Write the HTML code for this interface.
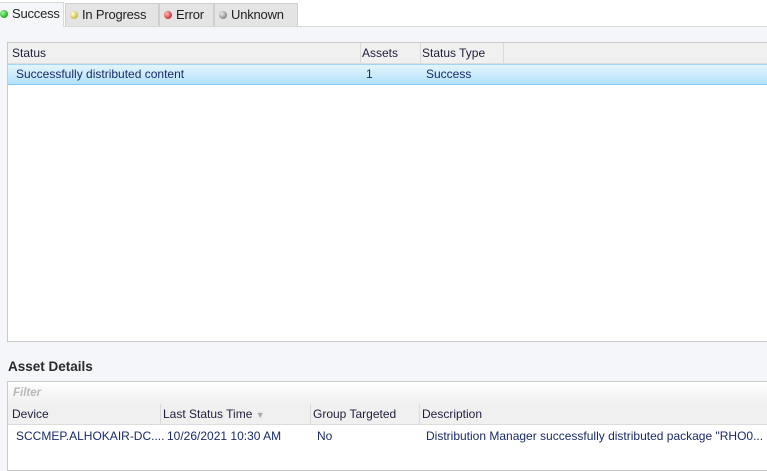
<!DOCTYPE html>
<html><head><style>
body{margin:0;width:767px;height:464px;overflow:hidden;background:#f5f6f9;font-family:"Liberation Sans",sans-serif;position:relative;color:#1e1e50;white-space:nowrap}
.abs{position:absolute}
.tabbar{left:0;top:0;width:767px;height:26px;background:#fff;border-bottom:1px solid #d8d8d8}
.tab{position:absolute;top:3px;height:23px;background:#e4e4e4;border:1px solid #cfcfcf;border-bottom:none;box-sizing:border-box;font-size:13px;letter-spacing:-0.2px;color:#222;line-height:22px;padding-left:4px;white-space:nowrap;overflow:hidden}
.tab.sel{top:2px;height:25px;background:#f5f6f9;border-color:#d8d8d8;padding-left:1px}
.dot{display:inline-block;width:8px;height:8px;border-radius:50%;margin-right:4px;vertical-align:0}
.panel{left:7px;top:42px;width:770px;height:300px;background:#fff;border:1px solid #c9c9c9;box-sizing:border-box}
.hdr{position:absolute;left:0;right:0;height:20px;background:#f0f0f0;border-bottom:1px solid #dcdcdc;font-size:12px;line-height:20px;color:#1e1e3c}
.hdr span,.row span{position:absolute}
.sep{position:absolute;top:0;width:1px;height:20px;background:#dadada}
.row{position:absolute;left:0;right:0;height:19px;font-size:12px;line-height:19px;color:#1a2a6a}
</style></head><body>
<div class="abs tabbar"></div>
<div class="tab sel" style="left:-2px;width:66px"><span class="dot" style="background:radial-gradient(circle at 35% 35%,#9f9,#2a2 70%)"></span>Success</div>
<div class="tab" style="left:65px;width:94px"><span class="dot" style="background:radial-gradient(circle at 35% 35%,#ffe,#cb3 70%)"></span>In Progress</div>
<div class="tab" style="left:159px;width:55px"><span class="dot" style="background:radial-gradient(circle at 35% 35%,#fbb,#c33 70%)"></span>Error</div>
<div class="tab" style="left:214px;width:84px"><span class="dot" style="background:radial-gradient(circle at 35% 35%,#eee,#888 70%)"></span>Unknown</div>

<div class="abs panel">
 <div class="hdr" style="top:0"><span style="left:4px">Status</span><div class="sep" style="left:352px"></div><span style="left:354px">Assets</span><div class="sep" style="left:412px"></div><span style="left:414px">Status Type</span><div class="sep" style="left:495px"></div></div>
 <div class="row" style="top:21px;background:linear-gradient(#e4f5fd,#b3e2fa);border-top:1px solid #9fd6f5;border-bottom:1px solid #84c9f0"><span style="left:8px">Successfully distributed content</span><span style="left:358px">1</span><span style="left:418px">Success</span></div>
</div>

<div class="abs" style="left:8px;top:359px;font-size:13.5px;font-weight:bold;color:#2a2a2a">Asset Details</div>
<div class="abs" style="left:7px;top:381px;width:770px;height:90px;background:#fff;border:1px solid #c9c9c9;box-sizing:border-box">
 <div class="abs" style="left:0;right:0;top:0;height:22px;background:linear-gradient(#fff,#f0f0f0);font-size:11.5px;font-style:italic;font-weight:bold;color:#b8b8b8;line-height:22px;padding-left:5px">Filter</div>
 <div class="hdr" style="top:22px"><span style="left:4px">Device</span><div class="sep" style="left:152px"></div><span style="left:155px">Last Status Time <span style="position:static;color:#aaa;font-size:9px">&#9660;</span></span><div class="sep" style="left:302px"></div><span style="left:305px">Group Targeted</span><div class="sep" style="left:411px"></div><span style="left:414px">Description</span></div>
 <div class="row" style="top:45px"><span style="left:8px">SCCMEP.ALHOKAIR-DC....</span><span style="left:159px">10/26/2021 10:30 AM</span><span style="left:309px">No</span><span style="left:418px">Distribution Manager successfully distributed package "RHO0...</span></div>
</div>
</body></html>
